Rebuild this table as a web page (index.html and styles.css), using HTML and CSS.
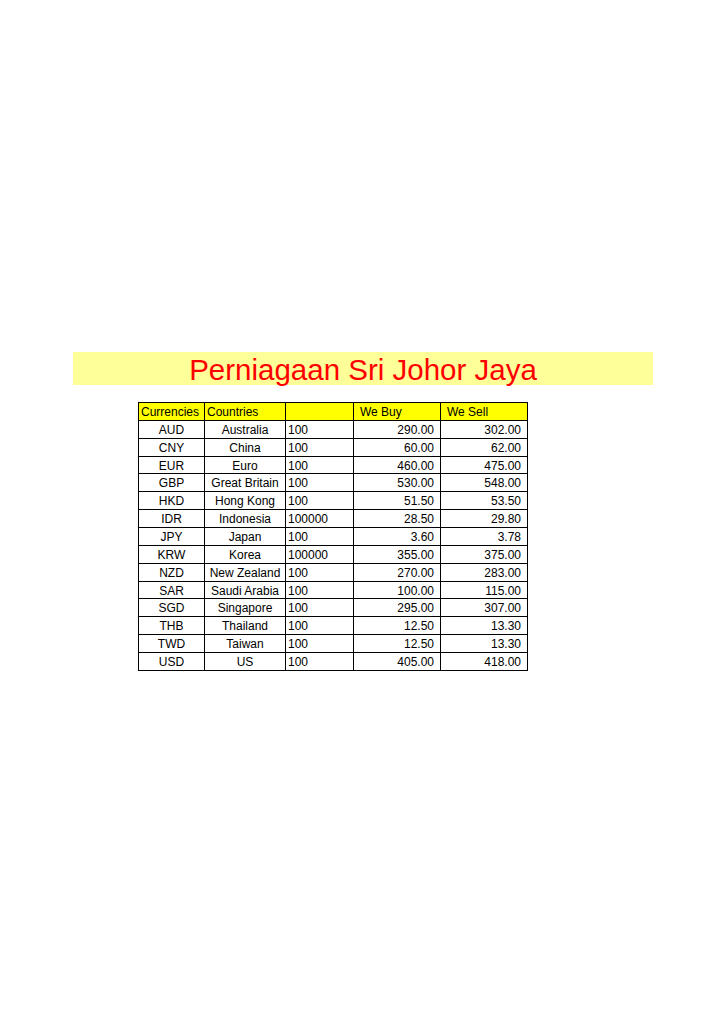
FILE: index.html
```html
<!DOCTYPE html>
<html>
<head>
<meta charset="utf-8">
<link rel="stylesheet" href="styles.css">
</head>
<body>
<div class="page">
  <div class="title">Perniagaan Sri Johor Jaya</div>
  <table class="rates">
    <colgroup>
      <col class="c1"><col class="c2"><col class="c3"><col class="c4"><col class="c5">
    </colgroup>
    <tr class="head"><td>Currencies</td><td>Countries</td><td></td><td class="ind">We Buy</td><td class="ind">We Sell</td></tr>
    <tr><td class="ctr">AUD</td><td class="ctr">Australia</td><td>100</td><td class="num">290.00</td><td class="num">302.00</td></tr>
    <tr><td class="ctr">CNY</td><td class="ctr">China</td><td>100</td><td class="num">60.00</td><td class="num">62.00</td></tr>
    <tr><td class="ctr">EUR</td><td class="ctr">Euro</td><td>100</td><td class="num">460.00</td><td class="num">475.00</td></tr>
    <tr><td class="ctr">GBP</td><td class="ctr">Great Britain</td><td>100</td><td class="num">530.00</td><td class="num">548.00</td></tr>
    <tr><td class="ctr">HKD</td><td class="ctr">Hong Kong</td><td>100</td><td class="num">51.50</td><td class="num">53.50</td></tr>
    <tr><td class="ctr">IDR</td><td class="ctr">Indonesia</td><td>100000</td><td class="num">28.50</td><td class="num">29.80</td></tr>
    <tr><td class="ctr">JPY</td><td class="ctr">Japan</td><td>100</td><td class="num">3.60</td><td class="num">3.78</td></tr>
    <tr><td class="ctr">KRW</td><td class="ctr">Korea</td><td>100000</td><td class="num">355.00</td><td class="num">375.00</td></tr>
    <tr><td class="ctr">NZD</td><td class="ctr">New Zealand</td><td>100</td><td class="num">270.00</td><td class="num">283.00</td></tr>
    <tr><td class="ctr">SAR</td><td class="ctr">Saudi Arabia</td><td>100</td><td class="num">100.00</td><td class="num">115.00</td></tr>
    <tr><td class="ctr">SGD</td><td class="ctr">Singapore</td><td>100</td><td class="num">295.00</td><td class="num">307.00</td></tr>
    <tr><td class="ctr">THB</td><td class="ctr">Thailand</td><td>100</td><td class="num">12.50</td><td class="num">13.30</td></tr>
    <tr><td class="ctr">TWD</td><td class="ctr">Taiwan</td><td>100</td><td class="num">12.50</td><td class="num">13.30</td></tr>
    <tr><td class="ctr">USD</td><td class="ctr">US</td><td>100</td><td class="num">405.00</td><td class="num">418.00</td></tr>
  </table>
</div>
</body>
</html>
```
FILE: styles.css
```css
html, body {
  margin: 0;
  padding: 0;
  background: #ffffff;
}
.page {
  width: 725px;
  height: 1024px;
  padding-top: 352px;
  box-sizing: border-box;
  font-family: "Liberation Sans", Arial, sans-serif;
}
.title {
  margin-left: 73px;
  width: 580px;
  height: 33px;
  background: #ffff99;
  color: #ff0000;
  font-size: 29.5px;
  line-height: 35px;
  text-align: center;
}
.rates {
  margin-left: 138px;
  margin-top: 17px;
  border-collapse: collapse;
  table-layout: fixed;
  width: 389px;
  font-size: 12px;
  color: #000;
}
.c1 { width: 66px; }
.c2 { width: 81px; }
.c3 { width: 68px; }
.c4 { width: 87px; }
.c5 { width: 87px; }
.rates td {
  border: 1px solid #000;
  height: 15.87px;
  padding: 1px 2px 0 2px;
  line-height: 14px;
  white-space: nowrap;
  overflow: hidden;
}
.rates .head td {
  background: #ffff00;
}
.rates .head td.ind { padding-left: 6px; }
.rates td.ctr { text-align: center; }
.rates td.num { text-align: right; padding-right: 6px; }
```
